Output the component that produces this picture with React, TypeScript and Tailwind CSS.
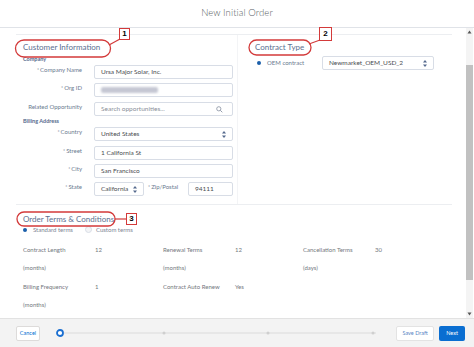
import React from "react";

const Arrows = () => (
  <svg width="4" height="7" viewBox="0 0 4 7" className="shrink-0">
    <path d="M2 0 L4 2.5 L0 2.5 Z" fill="#54698d" />
    <path d="M2 7 L4 4.5 L0 4.5 Z" fill="#54698d" />
  </svg>
);

const Label = ({ children, req }: { children: React.ReactNode; req?: boolean }) => (
  <div className="w-[71px] shrink-0 text-right text-[6px] leading-[8px] text-[#6b7a90] pr-[12px] pt-[1px]">
    {req && <span className="text-[#6b7a90] mr-[1px] text-[5px]">*</span>}
    {children}
  </div>
);

const Input = ({ children, className = "" }: { children?: React.ReactNode; className?: string }) => (
  <div className={`h-[14px] border border-[#d8dde6] rounded-[2px] bg-white flex items-center px-[6px] text-[6.5px] text-[#4a4d52] ${className}`}>
    {children}
  </div>
);

const Row = ({ label, req, children, mt }: { label: string; req?: boolean; children: React.ReactNode; mt: string }) => (
  <div className={`flex items-start ${mt}`}>
    <Label req={req}>{label}</Label>
    <div className="w-[139px]">{children}</div>
  </div>
);

export default function App() {
  return (
    <div className="relative w-[474px] h-[347px] bg-white flex flex-col overflow-hidden font-['Lato',sans-serif]">
      {/* header */}
      <div className="h-[28px] shrink-0 border-b border-[#e0e3e8] flex items-center justify-center text-[9.5px] text-[#5a5f66] font-light tracking-[0.1px]">
        New Initial Order
      </div>

      {/* body */}
      <div className="flex-1 flex min-h-0">
        <div className="flex-1 pl-[16px] pr-[14px]">
          <div className="mt-[6px] border-t border-b border-[#eceef1] h-[171px] flex">
            {/* left column */}
            <div className="w-[222px] pl-[7px] border-r border-[#f3f4f6]">
              <div className="mt-[6px] h-[12px] flex items-center text-[8px] text-[#5b6f90]">Customer Information</div>
              <div className="mt-[2px] h-[8px] flex items-center text-[5.5px] font-bold text-[#54698d]">Company</div>
              <Row label="Company Name" req mt="mt-[2px]">
                <Input>Ursa Major Solar, Inc.</Input>
              </Row>
              <Row label="Org ID" req mt="mt-[4px]">
                <Input>
                  <div className="w-[57px] h-[6px] bg-[#c5c7d3] rounded-[2px] blur-[1.2px]" />
                </Input>
              </Row>
              <Row label="Related Opportunity" mt="mt-[5px]">
                <Input className="justify-between">
                  <span className="text-[#8a8f99]">Search opportunities...</span>
                  <svg width="7" height="7" viewBox="0 0 10 10" className="mr-[3px]">
                    <circle cx="4" cy="4" r="3" fill="none" stroke="#8a93a3" strokeWidth="1.2" />
                    <path d="M6.2 6.2 L9 9" stroke="#8a93a3" strokeWidth="1.3" />
                  </svg>
                </Input>
              </Row>
              <div className="mt-[1px] h-[8px] flex items-center text-[5.5px] font-bold text-[#54698d]">Billing Address</div>
              <Row label="Country" req mt="mt-[2px]">
                <Input className="justify-between">
                  <span>United States</span>
                  <Arrows />
                </Input>
              </Row>
              <Row label="Street" req mt="mt-[5px]">
                <Input>1 California St</Input>
              </Row>
              <Row label="City" req mt="mt-[4px]">
                <Input>San Francisco</Input>
              </Row>
              <div className="flex items-start mt-[4px]">
                <Label req>State</Label>
                <Input className="w-[50px] justify-between px-[4px]">
                  <span>California</span>
                  <Arrows />
                </Input>
                <div className="w-[44px] pl-[4px] text-[6px] leading-[8px] text-[#6b7a90] pt-[1px]">
                  <span className="text-[5px] mr-[1px]">*</span>Zip/Postal
                </div>
                <Input className="w-[45px]">94111</Input>
              </div>
            </div>
            {/* right column */}
            <div className="flex-1 pl-[17px]">
              <div className="mt-[6px] h-[12px] flex items-center text-[8px] text-[#5b6f90]">Contract Type</div>
              <div className="mt-[3px] flex items-center">
                <div className="w-[4px] h-[4px] rounded-full bg-[#1b5faa] ml-[2px]" />
                <span className="ml-[6px] w-[55px] text-[6px] text-[#6b7a90] -mt-[2px]">OEM contract</span>
                <Input className="w-[112px] justify-between px-[4px]">
                  <span>Newmarket_OEM_USD_2</span>
                  <Arrows />
                </Input>
              </div>
            </div>
          </div>

          {/* order terms */}
          <div className="pl-[7px]">
            <div className="mt-[8px] h-[12px] flex items-center text-[8px] text-[#5b6f90]">Order Terms &amp; Conditions</div>
            <div className="h-[9px] flex items-center text-[6px] text-[#7c8594]">
              <div className="w-[4px] h-[4px] rounded-full bg-[#1b5faa]" />
              <span className="ml-[6px]">Standard terms</span>
              <div className="w-[7px] h-[7px] rounded-full border border-[#d8dde6] bg-[#f3f4f6] ml-[12px]" />
              <span className="ml-[4px]">Custom terms</span>
            </div>
            <div className="mt-[6px] grid grid-cols-[72px_68px_72px_68px_72px_1fr] text-[6px] text-[#73777e] auto-rows-[18.5px] items-center">
              <div>Contract Length</div>
              <div>12</div>
              <div>Renewal Terms</div>
              <div>12</div>
              <div>Cancellation Terms</div>
              <div>30</div>
              <div>(months)</div>
              <div />
              <div>(months)</div>
              <div />
              <div>(days)</div>
              <div />
              <div>Billing Frequency</div>
              <div>1</div>
              <div>Contract Auto Renew</div>
              <div>Yes</div>
              <div />
              <div />
              <div>(months)</div>
            </div>
          </div>
        </div>
        {/* scrollbar */}
        <div className="w-[7px] mr-[1px] shrink-0 bg-[#f4f4f4] flex flex-col items-center">
          <svg width="5" height="4" viewBox="0 0 5 4" className="mt-[2px]">
            <path d="M2.5 0.5 L4.5 3.5 L0.5 3.5 Z" fill="#555" />
          </svg>
          <div className="mt-[31px] w-[7px] h-[215px] bg-[#c1c1c1]" />
          <div className="flex-1" />
          <svg width="5" height="4" viewBox="0 0 5 4" className="mb-[2px]">
            <path d="M2.5 3.5 L4.5 0.5 L0.5 0.5 Z" fill="#555" />
          </svg>
        </div>
      </div>

      {/* footer */}
      <div className="h-[29px] shrink-0 bg-[#f3f3f3] border-t border-[#e2e2e2] flex items-center pl-[16px] pr-[9px]">
        <div className="w-[25px] h-[15px] bg-white border border-[#dddbda] rounded-[2px] flex items-center justify-center text-[5.5px] text-[#0070d2]">
          Cancel
        </div>
        <div className="ml-[16px] flex-1 flex items-center relative">
          <svg width="340" height="10" viewBox="0 0 340 10">
            <line x1="7" y1="5" x2="320" y2="5" stroke="#d4d4d4" strokeWidth="0.8" />
            <circle cx="4" cy="5" r="3" fill="white" stroke="#1b6fd1" strokeWidth="1.8" />
            <circle cx="108" cy="5" r="1.5" fill="#cfcfcf" />
            <circle cx="212" cy="5" r="1.5" fill="#cfcfcf" />
            <circle cx="317" cy="5" r="1.5" fill="#cfcfcf" />
          </svg>
        </div>
        <div className="w-[40px] h-[15px] bg-white border border-[#e3e3e3] rounded-[2px] flex items-center justify-center text-[5.5px] text-[#5a86c5]">
          Save Draft
        </div>
        <div className="ml-[5px] w-[27px] h-[15px] bg-[#0a6ed1] rounded-[2px] flex items-center justify-center text-[5.5px] text-white">
          Next
        </div>
      </div>

      {/* annotations */}
      <svg className="absolute left-0 top-0 pointer-events-none" width="474" height="347" viewBox="0 0 474 347">
        <rect x="15.5" y="40" width="95" height="17" rx="8.5" fill="none" stroke="#d33a3a" strokeWidth="1.3" />
        <line x1="109" y1="45" x2="120" y2="39" stroke="#d33a3a" strokeWidth="1.2" />
        <rect x="249" y="40" width="62" height="15" rx="7.5" fill="none" stroke="#d33a3a" strokeWidth="1.3" />
        <line x1="309" y1="44" x2="320" y2="40" stroke="#d33a3a" strokeWidth="1.2" />
        <rect x="17" y="212" width="98" height="14" rx="7" fill="none" stroke="#d33a3a" strokeWidth="1.3" />
        <line x1="115" y1="219" x2="126" y2="219" stroke="#d33a3a" strokeWidth="1.2" />
      </svg>
      <div className="absolute left-[119px] top-[28px] w-[11px] h-[12px] bg-white border border-[#d33a3a] flex items-center justify-center text-[8px] font-bold text-black font-['Liberation_Sans',sans-serif]">1</div>
      <div className="absolute left-[319px] top-[27px] w-[13px] h-[14px] bg-white border border-[#d33a3a] flex items-center justify-center text-[8px] font-bold text-black font-['Liberation_Sans',sans-serif]">2</div>
      <div className="absolute left-[126px] top-[213px] w-[11px] h-[12px] bg-white border border-[#d33a3a] flex items-center justify-center text-[8px] font-bold text-black font-['Liberation_Sans',sans-serif]">3</div>
    </div>
  );
}
